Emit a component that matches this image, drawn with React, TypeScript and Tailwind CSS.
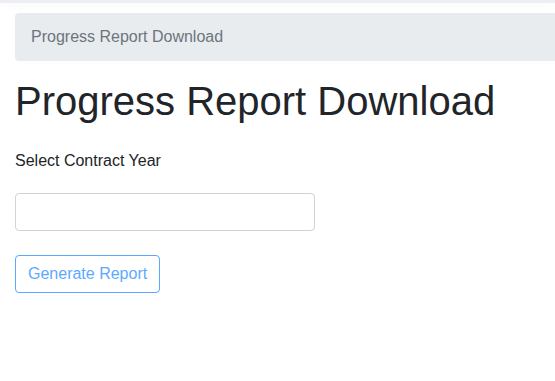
import React from "react";

const App: React.FC = () => {
  return (
    <div className="min-h-screen bg-white font-['Liberation_Sans',Arial,sans-serif] text-[#212529]">
      <div className="h-[3px] bg-[#eceef3] shadow-[0_3px_10px_rgba(30,40,80,0.04)]" />
      <div className="pl-[15px]">
        <nav className="mt-[10px] mb-[16px] h-[48px] rounded-l-[4px] bg-[#e9ecef] px-4 py-3 text-base leading-6 text-[#6c757d]">
          Progress Report Download
        </nav>
        <h1 className="m-0 text-[40px] leading-[48px] font-normal">
          Progress Report Download
        </h1>
        <label className="mt-[24px] block text-base leading-6">
          Select Contract Year
        </label>
        <input
          type="text"
          className="mt-[20px] block h-[38px] w-[300px] rounded-[4px] border border-[#ced4da] bg-white px-3 text-base outline-none"
        />
        <button
          type="button"
          disabled
          className="mt-[24px] h-[38px] rounded-[4px] border border-[#007bff] bg-white px-3 text-base leading-6 text-[#007bff] opacity-65"
        >
          Generate Report
        </button>
      </div>
    </div>
  );
};

export default App;
